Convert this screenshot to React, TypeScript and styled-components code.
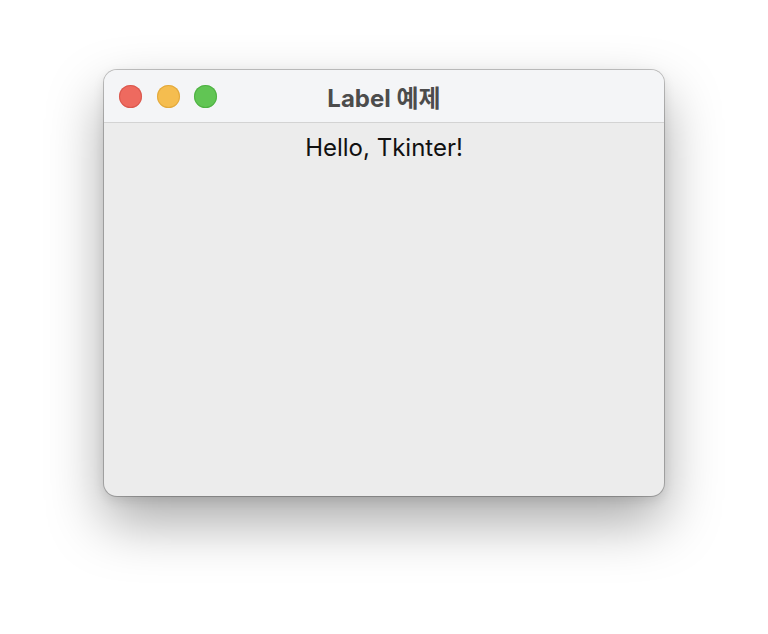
import styled, { createGlobalStyle } from "styled-components";

const GlobalStyle = createGlobalStyle`
  html, body {
    margin: 0;
    padding: 0;
    background: #ffffff;
  }
  body {
    font-family: Inter, "Noto Sans", "Noto Sans CJK KR", sans-serif;
  }
`;

const Page = styled.div`
  width: 768px;
  height: 634px;
  display: flex;
  justify-content: center;
  padding-top: 70px;
  box-sizing: border-box;
  overflow: hidden;
`;

const Window = styled.div`
  width: 560px;
  height: 426px;
  border-radius: 13px;
  overflow: hidden;
  background: #ececec;
  display: flex;
  flex-direction: column;
  box-shadow:
    0 0 0 1px rgba(0, 0, 0, 0.22),
    0 26px 55px rgba(0, 0, 0, 0.34),
    0 4px 12px rgba(0, 0, 0, 0.1);
`;

const TitleBar = styled.div`
  height: 52px;
  flex-shrink: 0;
  background: #f4f5f7;
  border-bottom: 1px solid #d3d3d3;
  display: flex;
  align-items: center;
  position: relative;
  padding-left: 15px;
`;

const Lights = styled.div`
  display: flex;
  gap: 14.5px;
  padding-top: 1px;
`;

const Light = styled.span<{ $fill: string; $edge: string }>`
  width: 23px;
  height: 23px;
  border-radius: 50%;
  background: ${(p) => p.$fill};
  box-shadow: inset 0 0 0 1px ${(p) => p.$edge};
`;

const Title = styled.div`
  position: absolute;
  inset: 0;
  display: flex;
  align-items: center;
  justify-content: center;
  font-family: Inter, "Noto Sans CJK KR", sans-serif;
  font-weight: 700;
  font-size: 24px;
  color: #4c4c4c;
  pointer-events: none;
`;

const Content = styled.div`
  flex: 1;
  display: flex;
  justify-content: center;
  padding-top: 13px;
`;

const Label = styled.div`
  font-family: Inter, "Noto Sans", sans-serif;
  font-size: 24px;
  line-height: 24px;
  color: #111111;
`;

export default function App() {
  return (
    <>
      <GlobalStyle />
      <Page>
        <Window>
          <TitleBar>
            <Lights>
              <Light $fill="#ee6a5f" $edge="rgba(200,70,60,0.5)" />
              <Light $fill="#f5bd4f" $edge="rgba(210,150,40,0.5)" />
              <Light $fill="#61c554" $edge="rgba(60,160,50,0.5)" />
            </Lights>
            <Title>Label 예제</Title>
          </TitleBar>
          <Content>
            <Label>Hello, Tkinter!</Label>
          </Content>
        </Window>
      </Page>
    </>
  );
}
